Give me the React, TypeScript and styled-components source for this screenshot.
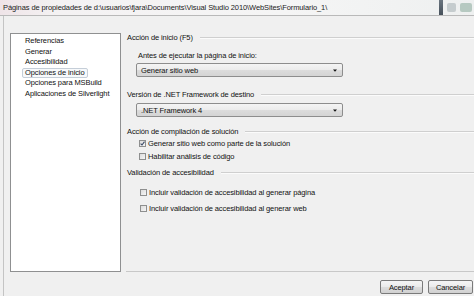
import styled, { createGlobalStyle } from "styled-components";

const GlobalStyle = createGlobalStyle`
  html, body {
    margin: 0;
    padding: 0;
    background: #f0f0f0;
  }
  body {
    font-family: "Liberation Sans", Arial, sans-serif;
    font-size: 7.5px;
    letter-spacing: -0.1px;
    color: #111;
  }
`;

const Window = styled.div`
  width: 474px;
  height: 296px;
  display: flex;
  flex-direction: column;
  overflow: hidden;
  background: #f0f0f0;
`;

const TitleBar = styled.div`
  height: 16px;
  display: flex;
  align-items: center;
  padding-left: 3px;
  background: linear-gradient(90deg, #efe4e8 0%, #f4f2f3 12%, #f5f5f5 60%, #eef0f0 100%);
  border-bottom: 1px solid #b9b9b9;
  box-sizing: border-box;
  white-space: nowrap;

  .title {
    color: #222;
  }
`;

const Chrome = styled.div`
  margin-left: auto;
  display: flex;
  align-self: stretch;
  align-items: stretch;
  gap: 4px;

  .bar {
    width: 4px;
    background: linear-gradient(#6b7680, #46505a);
  }
  .btn {
    width: 9px;
    margin: 3px 0;
    background: #b4bcbf;
    border-radius: 2px;
    opacity: 0.7;
  }
  .btn.green {
    width: 12px;
    background: #9eb8ad;
    margin-right: 2px;
  }
`;

const Body = styled.div`
  flex: 1;
  display: flex;
  flex-direction: column;
  border-left: 1px solid #c4c4c4;
  margin-left: 3px;
  padding: 17px 0 0 6px;
`;

const Main = styled.div`
  display: flex;
  gap: 5px;
  height: 239px;
`;

const NavList = styled.ul`
  list-style: none;
  margin: 0;
  padding: 2px 0 0 13px;
  width: 111px;
  box-sizing: border-box;
  background: #fff;
  border: 1px solid #8f9091;
`;

const NavItem = styled.li<{ $selected?: boolean }>`
  height: 10.6px;
  padding: 0 2px;
  margin-left: -2px;
  width: fit-content;
  box-sizing: border-box;
  border: 1px solid ${(p) => (p.$selected ? "#c5ced8" : "transparent")};
  border-radius: 2px;
  background: ${(p) => (p.$selected ? "#f7f9fb" : "transparent")};
  line-height: 8.6px;
  white-space: nowrap;
`;

const Panel = styled.div`
  flex: 1;
  display: flex;
  flex-direction: column;
  padding-left: 1px;
  border-bottom: 1px solid #c8c8c8;
`;

const GroupHeader = styled.div<{ $mt: number }>`
  display: flex;
  align-items: center;
  gap: 7px;
  height: 9px;
  margin-top: ${(p) => p.$mt}px;
  white-space: nowrap;

  &::after {
    content: "";
    flex: 1;
    height: 1px;
    background: #cfcfcf;
    border-bottom: 1px solid #fbfbfb;
  }
`;

const FieldLabel = styled.div<{ $mt: number }>`
  height: 10px;
  line-height: 10px;
  margin: ${(p) => p.$mt}px 0 0 11px;
`;

const Select = styled.div<{ $mt: number }>`
  width: 207px;
  height: 14px;
  box-sizing: border-box;
  margin: ${(p) => p.$mt}px 0 0 9px;
  padding: 0 5px 0 4px;
  display: flex;
  align-items: center;
  justify-content: space-between;
  border: 1px solid #8d8d8d;
  border-radius: 2px;
  background: linear-gradient(#f4f4f4 0%, #ebebeb 50%, #dcdcdc 51%, #d4d4d4 100%);
`;

const Check = styled.label<{ $mt: number; $indent: number }>`
  display: flex;
  align-items: center;
  gap: 2px;
  height: 10px;
  margin: ${(p) => p.$mt}px 0 0 ${(p) => p.$indent}px;
  white-space: nowrap;
`;

const Box = styled.span`
  width: 7px;
  height: 7px;
  box-sizing: border-box;
  border: 1px solid #8e8f8f;
  background: linear-gradient(135deg, #dcdcdc, #f6f6f6);
  display: flex;
  align-items: center;
  justify-content: center;
`;

const Footer = styled.div`
  flex: 1;
  display: flex;
  justify-content: flex-end;
  align-items: flex-start;
  gap: 5px;
  padding: 8px 1px 0 0;
`;

const Button = styled.button<{ $w: number }>`
  width: ${(p) => p.$w}px;
  height: 14px;
  padding: 0;
  font: inherit;
  letter-spacing: inherit;
  color: #111;
  border: 1px solid #7a7a7a;
  border-radius: 2px;
  background: linear-gradient(#f5f5f5 0%, #ebebeb 50%, #dddddd 51%, #d1d1d1 100%);
`;

const Arrow = () => (
  <svg width="4" height="3" viewBox="0 0 4 3">
    <path d="M0 0.5h4L2 2.8z" fill="#111" />
  </svg>
);

const Tick = () => (
  <svg width="5" height="5" viewBox="0 0 5 5">
    <path d="M0.6 2.6L2 4L4.5 0.6" stroke="#3b4a66" strokeWidth="1.1" fill="none" />
  </svg>
);

const navItems = [
  "Referencias",
  "Generar",
  "Accesibilidad",
  "Opciones de inicio",
  "Opciones para MSBuild",
  "Aplicaciones de Silverlight",
];

export default function App() {
  return (
    <Window>
      <GlobalStyle />
      <TitleBar>
        <span className="title">
          Páginas de propiedades de d:\usuarios\fjara\Documents\Visual Studio 2010\WebSites\Formulario_1\
        </span>
        <Chrome>
          <span className="bar" />
          <span className="btn" />
          <span className="btn green" />
        </Chrome>
      </TitleBar>
      <Body>
        <Main>
          <NavList>
            {navItems.map((item) => (
              <NavItem key={item} $selected={item === "Opciones de inicio"}>
                {item}
              </NavItem>
            ))}
          </NavList>
          <Panel>
            <GroupHeader $mt={0}>Acción de inicio (F5)</GroupHeader>
            <FieldLabel $mt={9}>Antes de ejecutar la página de inicio:</FieldLabel>
            <Select $mt={2}>
              <span>Generar sitio web</span>
              <Arrow />
            </Select>
            <GroupHeader $mt={13}>Versión de .NET Framework de destino</GroupHeader>
            <Select $mt={4}>
              <span>.NET Framework 4</span>
              <Arrow />
            </Select>
            <GroupHeader $mt={10}>Acción de compilación de solución</GroupHeader>
            <Check $mt={2} $indent={12}>
              <Box>
                <Tick />
              </Box>
              Generar sitio web como parte de la solución
            </Check>
            <Check $mt={3} $indent={12}>
              <Box />
              Habilitar análisis de código
            </Check>
            <GroupHeader $mt={7}>Validación de accesibilidad</GroupHeader>
            <Check $mt={10} $indent={13}>
              <Box />
              Incluir validación de accesibilidad al generar página
            </Check>
            <Check $mt={6} $indent={13}>
              <Box />
              Incluir validación de accesibilidad al generar web
            </Check>
          </Panel>
        </Main>
        <Footer>
          <Button $w={43}>Aceptar</Button>
          <Button $w={45}>Cancelar</Button>
        </Footer>
      </Body>
    </Window>
  );
}
